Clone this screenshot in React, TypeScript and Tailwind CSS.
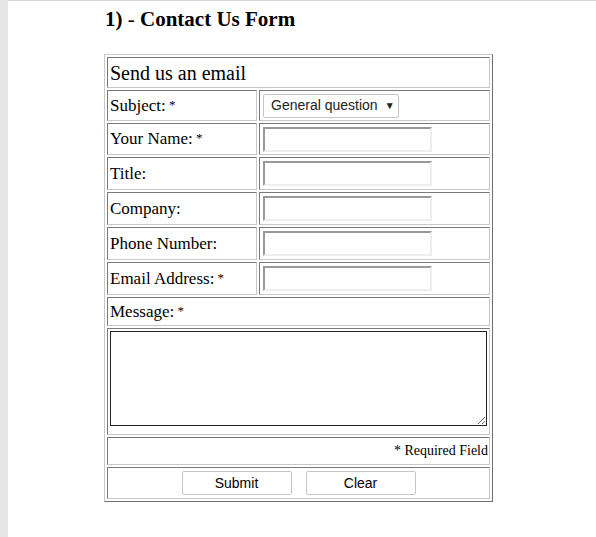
import React from 'react'

const serif = "font-['Liberation_Serif','Times_New_Roman',serif]"
const sans = "font-['Liberation_Sans',Arial,sans-serif]"

const cell =
  'border border-solid border-t-[#7a7a7a] border-l-[#7a7a7a] border-b-[#c8c8c8] border-r-[#c8c8c8] align-middle'

const fields: Array<{ label: string; required?: boolean; h: string }> = [
  { label: 'Your Name:', required: true, h: 'h-[32px]' },
  { label: 'Title:', h: 'h-[33px]' },
  { label: 'Company:', h: 'h-[33px]' },
  { label: 'Phone Number:', h: 'h-[33px]' },
  { label: 'Email Address:', required: true, h: 'h-[33px]' },
]

function Label({ text, required }: { text: string; required?: boolean }) {
  return (
    <span className="text-[17px] leading-none text-black">
      {text}
      {required && <span className="text-[13px] align-[2px]"> *</span>}
    </span>
  )
}

function TextInput() {
  return (
    <input
      type="text"
      className="block w-[169px] h-[25px] ml-[3px] bg-white border-2 border-solid border-t-[#999] border-l-[#999] border-b-[#eee] border-r-[#eee] outline-none"
    />
  )
}

export default function App() {
  return (
    <div className={`flex min-h-[537px] bg-white ${serif}`}>
      <div className="w-[8px] shrink-0 bg-[#e6e6e6]" />
      <div className="flex-1 border-t border-[#d4d4d4] pl-[96px]">
        <h2 className="mt-[6px] text-[21px] leading-[24px] font-bold text-black pl-[1px]">
          1) <span className="font-normal">-</span> Contact Us Form
        </h2>

        <form className="mt-[23px]" onSubmit={e => e.preventDefault()}>
          <table className="table-fixed border-separate border-spacing-[2px] w-[389px] border border-solid border-t-[#c8c8c8] border-l-[#c8c8c8] border-b-[#6e6e6e] border-r-[#6e6e6e]">
            <colgroup>
              <col className="w-[150px]" />
              <col className="w-[231px]" />
            </colgroup>
            <tbody>
              <tr>
                <td colSpan={2} className={`${cell} h-[31px] pl-[2px] text-[20px] leading-none`}>
                  Send us an email
                </td>
              </tr>
              <tr>
                <td className={`${cell} h-[31px] pl-[2px]`}>
                  <Label text="Subject:" required />
                </td>
                <td className={`${cell} h-[31px]`}>
                  <div
                    className={`${sans} ml-[3px] flex items-center gap-[7px] whitespace-nowrap w-[136px] h-[24px] px-[7px] border border-solid border-[#c6c6c6] rounded-[2px] bg-white text-[14px] text-[#222]`}
                  >
                    <span>General question</span>
                    <span className="text-[10px]">▼</span>
                  </div>
                </td>
              </tr>
              {fields.map(f => (
                <tr key={f.label}>
                  <td className={`${cell} ${f.h} pl-[2px]`}>
                    <Label text={f.label} required={f.required} />
                  </td>
                  <td className={`${cell} ${f.h}`}>
                    <TextInput />
                  </td>
                </tr>
              ))}
              <tr>
                <td colSpan={2} className={`${cell} h-[29px] pl-[2px]`}>
                  <Label text="Message:" required />
                </td>
              </tr>
              <tr>
                <td colSpan={2} className={`${cell} !align-top h-[107px] px-[2px] pt-[2px]`}>
                  <textarea className="block w-[377px] h-[95px] border border-solid border-[#222] bg-white outline-none" />
                </td>
              </tr>
              <tr>
                <td colSpan={2} className={`${cell} h-[28px] pr-[1px] text-right text-[14px] leading-none`}>
                  * Required Field
                </td>
              </tr>
              <tr>
                <td colSpan={2} className={`${cell} h-[32px]`}>
                  <div className={`${sans} flex justify-center gap-[14px]`}>
                    <button
                      type="submit"
                      className="w-[110px] h-[24px] border border-solid border-[#c6c6c6] rounded-[2px] bg-white text-[14px] text-black"
                    >
                      Submit
                    </button>
                    <button
                      type="reset"
                      className="w-[110px] h-[24px] border border-solid border-[#c6c6c6] rounded-[2px] bg-white text-[14px] text-black"
                    >
                      Clear
                    </button>
                  </div>
                </td>
              </tr>
            </tbody>
          </table>
        </form>
      </div>
    </div>
  )
}
